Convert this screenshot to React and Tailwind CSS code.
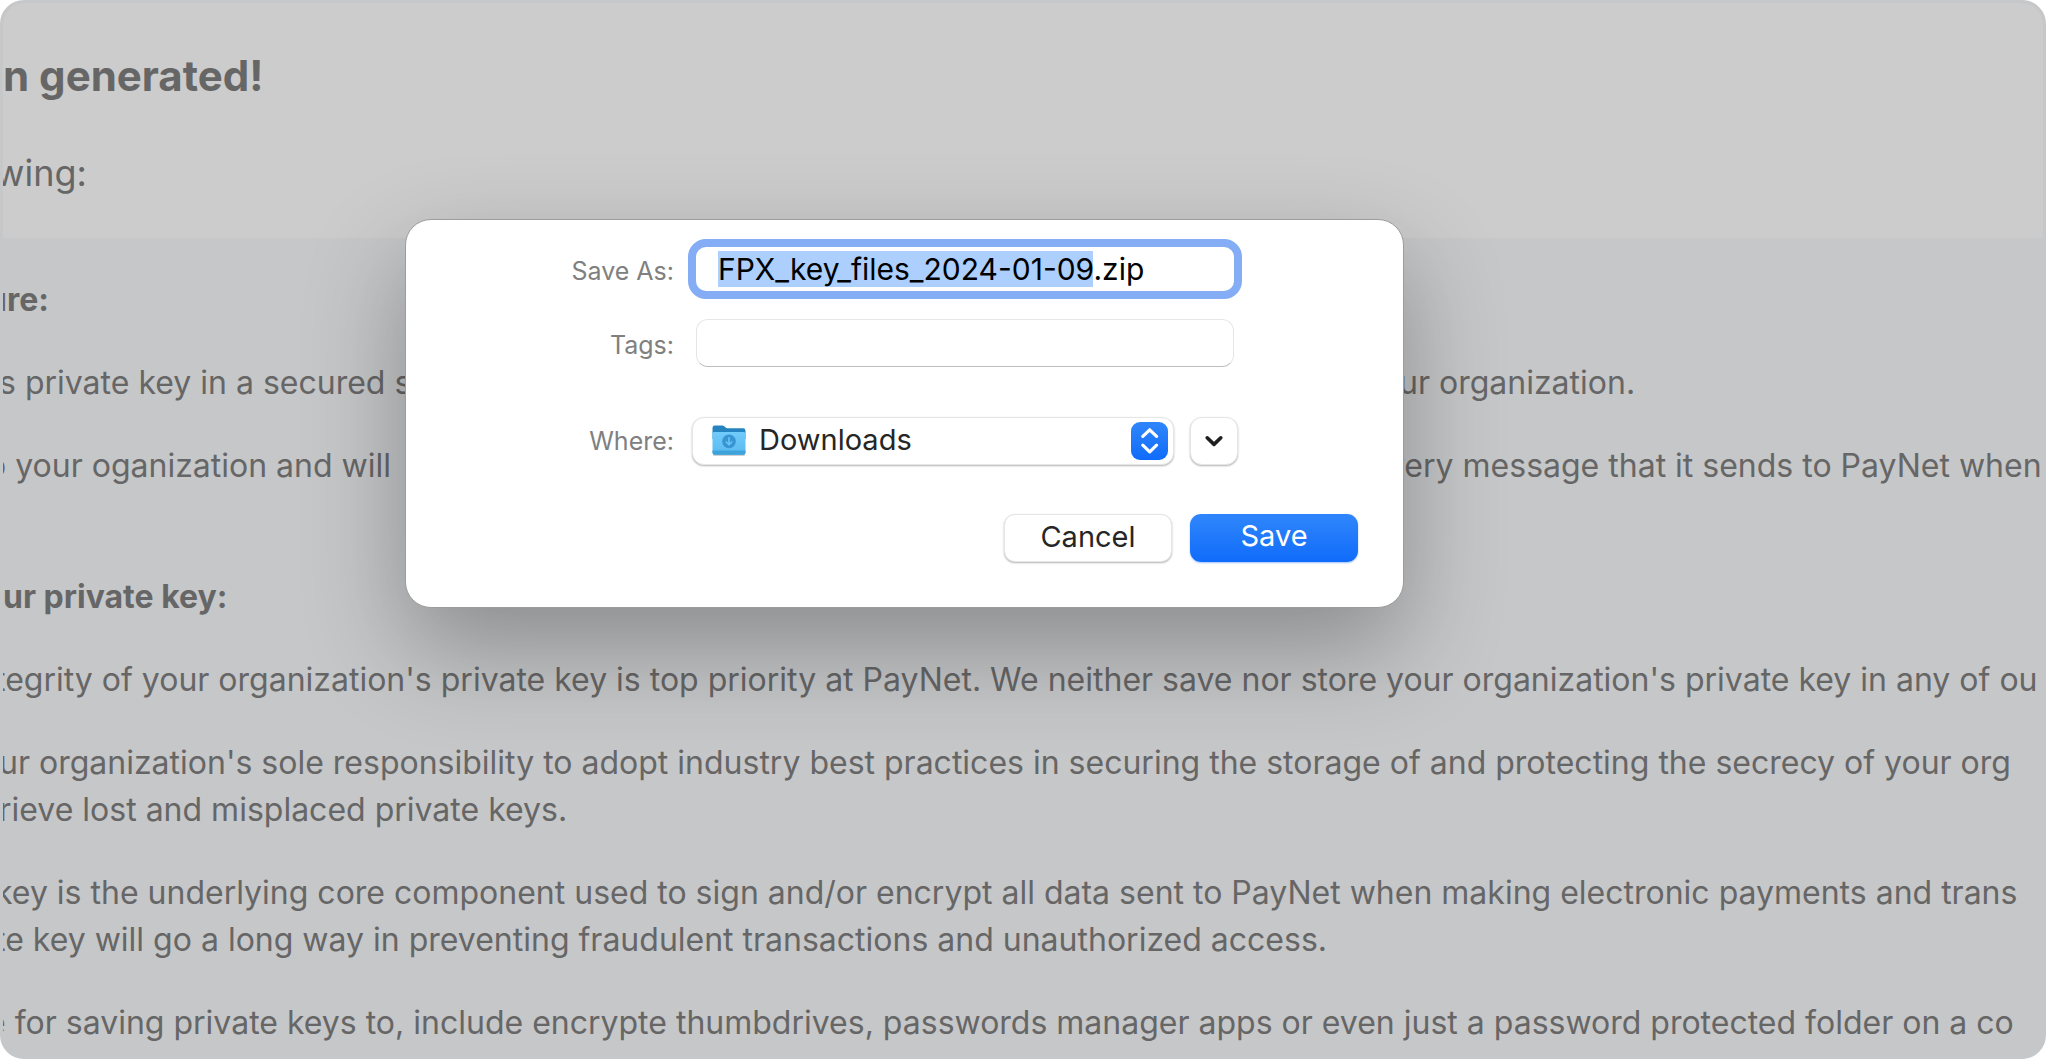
import { useEffect, useRef } from 'react';

const SAVE_NAME = 'FPX_key_files_2024-01-09.zip';

function FolderIcon({ className }) {
  return (
    <svg viewBox="0 0 34 32" className={className} aria-hidden="true">
      <defs>
        <linearGradient id="folder-front" x1="0" y1="0" x2="0" y2="1">
          <stop offset="0" stopColor="#72cbfa" />
          <stop offset="1" stopColor="#58b9f0" />
        </linearGradient>
      </defs>
      <rect x="1" y="28" width="32" height="3" rx="1.5" fill="#000" opacity="0.18" />
      <path d="M0.5 3a2.4 2.4 0 0 1 2.4-2.4h7.3c1 0 1.6 0.3 2.3 0.9l1.2 1c0.7 0.6 1.2 0.8 2.2 0.8h15.2a2.4 2.4 0 0 1 2.4 2.4V14H0.5Z" fill="#2583bf" />
      <path d="M0.5 8.6a1.6 1.6 0 0 1 1.6-1.6h29.8a1.6 1.6 0 0 1 1.6 1.6v19a2.2 2.2 0 0 1-2.2 2.2H2.7a2.2 2.2 0 0 1-2.2-2.2Z" fill="url(#folder-front)" />
      <path d="M0.5 25.6h33v2a2.2 2.2 0 0 1-2.2 2.2H2.7a2.2 2.2 0 0 1-2.2-2.2Z" fill="#3fa3db" />
      <circle cx="17" cy="16.4" r="6.8" fill="#3795d3" />
      <path d="M17 12.8v6.6M14.2 17l2.8 2.8 2.8-2.8" fill="none" stroke="#6cc4f5" strokeWidth="1.6" strokeLinecap="round" strokeLinejoin="round" />
    </svg>
  );
}

function UpDownIcon({ className }) {
  return (
    <svg viewBox="0 0 37 38" className={className} aria-hidden="true">
      <path d="M11.8 14.4l6.9-6.6 6.9 6.6M11.8 23.2l6.9 6.6 6.9-6.6" fill="none" stroke="#fff" strokeWidth="3.2" strokeLinecap="round" strokeLinejoin="round" />
    </svg>
  );
}

function ChevronIcon({ className }) {
  return (
    <svg viewBox="0 0 20 14" className={className} aria-hidden="true">
      <path d="M3.2 3.8l6.8 6.6 6.8-6.6" fill="none" stroke="#1f1f1f" strokeWidth="3.6" strokeLinecap="round" strokeLinejoin="round" />
    </svg>
  );
}

// A line of page text that the dialog splits in two
function SplitLine({ start, end, className }) {
  return (
    <p className={`flex ${className}`}>
      <span className="w-[1400px] shrink-0">{start}</span>
      <span>{end}</span>
    </p>
  );
}

function PageText() {
  return (
    <main className="flex-1 overflow-hidden whitespace-nowrap text-[#666666]">
      <header className="h-[235px] bg-[#cccccc] pt-[43px]">
        <h1 className="text-[42px] leading-[60px] font-bold">n generated!</h1>
        <p className="-ml-2 mt-10 text-[36px] leading-[54px]">wing:</p>
      </header>
      <div className="flex flex-col gap-9 pt-[38px] text-[32px] leading-[47px]">
        <h2 className="-ml-4 font-bold">ure:</h2>
        <SplitLine className="-ml-1" start="s private key in a secured s" end="ur organization." />
        <SplitLine className="-ml-4" start="o your oganization and will" end="very message that it sends to PayNet when" />
        <h2 className="mt-12 font-bold">ur private key:</h2>
        <p className="-ml-2">tegrity of your organization's private key is top priority at PayNet. We neither save nor store your organization's private key in any of ou</p>
        <p className="-ml-1">
          ur organization's sole responsibility to adopt industry best practices in securing the storage of and protecting the secrecy of your org
          <br />
          rieve lost and misplaced private keys.
        </p>
        <p className="-ml-2">
          key is the underlying core component used to sign and/or encrypt all data sent to PayNet when making electronic payments and trans
          <br />
          te key will go a long way in preventing fraudulent transactions and unauthorized access.
        </p>
        <p className="-ml-4">e for saving private keys to, include encrypte thumbdrives, passwords manager apps or even just a password protected folder on a co</p>
      </div>
    </main>
  );
}

function SaveDialog() {
  const nameRef = useRef(null);

  useEffect(() => {
    // Select the name without its extension, so typing keeps the .zip
    nameRef.current.focus();
    nameRef.current.setSelectionRange(0, SAVE_NAME.lastIndexOf('.'));
  }, []);

  return (
    <form
      role="dialog"
      aria-label="Save"
      onSubmit={(e) => e.preventDefault()}
      className="absolute top-[216px] left-[402px] w-[999px] rounded-[26px] border border-[#9c9c9c] bg-white pt-[27px] pb-[45px] text-[29px] text-[#262626] shadow-[0_40px_100px_rgba(0,0,0,0.3)]"
    >
      <div className="grid grid-cols-[268px_546px] items-center gap-x-[18px]">
        <label htmlFor="save-name" className="pt-1 text-right text-[25px] leading-9 text-[#808080]">Save As:</label>
        <input
          id="save-name"
          ref={nameRef}
          type="text"
          defaultValue={SAVE_NAME}
          autoComplete="off"
          spellCheck={false}
          className="mx-1 h-11 rounded-[10px] bg-white px-[22px] text-[30px] leading-9 text-black outline-8 outline-[#84adf5] selection:bg-[#accffd] selection:text-black"
        />

        <label htmlFor="save-tags" className="mt-7 pt-1 text-right text-[25px] leading-9 text-[#808080]">Tags:</label>
        <input
          id="save-tags"
          type="text"
          autoComplete="off"
          className="mx-1 mt-7 h-12 rounded-[12px] border border-[#e6e6e6] border-b-[#bdbdbd] bg-white px-6 outline-none"
        />

        <label htmlFor="save-where" className="mt-[50px] text-right text-[25px] leading-9 text-[#808080]">Where:</label>
        <div className="mt-[50px] flex gap-4">
          <div className="relative flex-1">
            <select
              id="save-where"
              className="h-12 w-full appearance-none rounded-[12px] border border-[#e6e6e6] bg-white pb-1 pl-[66px] outline-none shadow-[0_1px_2px_rgba(0,0,0,0.3)]"
            >
              <option>Downloads</option>
            </select>
            <FolderIcon className="pointer-events-none absolute top-2 left-5 h-8 w-[34px]" />
            <span className="pointer-events-none absolute top-[5px] right-[6px] rounded-[9px] bg-linear-to-b from-[#2f86fb] to-[#0f6bfa]">
              <UpDownIcon className="h-[38px] w-[37px]" />
            </span>
          </div>
          <button
            type="button"
            aria-label="Show more"
            className="flex h-12 w-12 items-center justify-center rounded-[12px] border border-[#e6e6e6] bg-white shadow-[0_1px_2px_rgba(0,0,0,0.3)]"
          >
            <ChevronIcon className="h-[14px] w-5" />
          </button>
        </div>
      </div>

      <div className="mt-[49px] mr-[45px] flex justify-end gap-[18px]">
        <button type="button" className="h-12 w-[168px] rounded-[11px] border border-[#e6e6e6] bg-white pb-1 shadow-[0_1px_2px_rgba(0,0,0,0.3)]">
          Cancel
        </button>
        <button type="submit" className="h-12 w-[168px] rounded-[11px] bg-linear-to-b from-[#2f86fb] to-[#0f6bfa] pb-1 text-white shadow-[0_1px_2px_rgba(15,107,250,0.4)]">
          Save
        </button>
      </div>
    </form>
  );
}

export default function App() {
  return (
    <div className="bg-white font-['Inter',sans-serif]">
      <div className="relative flex min-h-screen flex-col overflow-hidden rounded-[24px] border-[3px] border-[#c6c7c9] bg-[#c6c7c9]">
        <PageText />
        <SaveDialog />
      </div>
    </div>
  );
}
